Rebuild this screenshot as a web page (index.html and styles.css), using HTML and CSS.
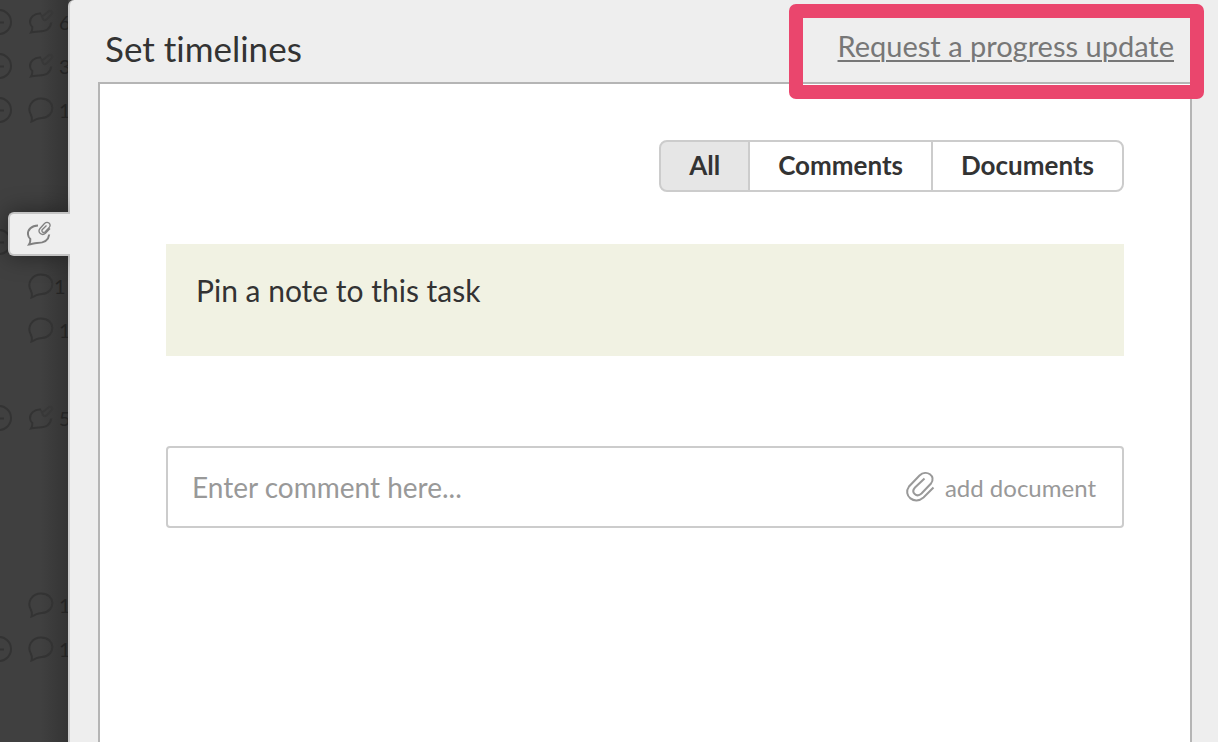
FILE: index.html
```html
<!DOCTYPE html>
<html lang="en">
<head>
<meta charset="utf-8">
<title>Set timelines</title>
<link rel="stylesheet" href="styles.css">
</head>
<body>
<svg class="symbols" aria-hidden="true">
  <symbol id="minus" viewBox="0 0 26 26"><circle cx="13" cy="13" r="12"/><path d="M9 13.500h9"/></symbol>
  <symbol id="bubble" viewBox="0 0 26 26"><path d="M3.500 24.500c.6-2 .4-4.500-.5-6.500C-1.500 10 4 1.500 13 1.500c15 0 15 18.500 1 19.500-3 .2-4 .5-5.500 1.200-1.500.8-3.500 1.800-5 2.300z"/></symbol>
  <symbol id="bubble-clip" viewBox="0 0 26 26"><path d="M13 4.500C6 4 1.500 9 2 13.500c.2 2 1 3.300 2.300 4.500.2 2-.3 4-1.300 5.500 3-.4 5-1 8-1 7 0 11.500-3 12.200-9"/><path class="faint" d="M13 5l2 5c1 2 3 1 4 0l5-5c1-2-1-4-3-3l-6 5"/></symbol>
</svg>
<main class="app">
  <aside class="rail" aria-hidden="true">
    <div class="row"><svg class="icon"><use href="#minus"/></svg><svg class="icon"><use href="#bubble-clip"/></svg><span>6</span></div>
    <div class="row"><svg class="icon"><use href="#minus"/></svg><svg class="icon"><use href="#bubble-clip"/></svg><span>3</span></div>
    <div class="row"><svg class="icon"><use href="#minus"/></svg><svg class="icon"><use href="#bubble"/></svg><span>1</span></div>
    <div class="row"></div>
    <div class="row"></div>
    <div class="row"><svg class="icon"><use href="#minus"/></svg></div>
    <div class="row"><i class="icon"></i><svg class="icon"><use href="#bubble"/></svg><span class="wide">1</span></div>
    <div class="row"><i class="icon"></i><svg class="icon"><use href="#bubble"/></svg><span>1</span></div>
    <div class="row"></div>
    <div class="row"><svg class="icon"><use href="#minus"/></svg><svg class="icon"><use href="#bubble-clip"/></svg><span>5</span></div>
    <div class="row"></div>
    <div class="row"></div>
    <div class="row"></div>
    <div class="row section"><i class="icon"></i><svg class="icon"><use href="#bubble"/></svg><span>1</span></div>
    <div class="row"><svg class="icon"><use href="#minus"/></svg><svg class="icon"><use href="#bubble"/></svg><span>1</span></div>
  </aside>
  <section class="panel">
    <button class="tab" type="button" aria-label="Comments and documents">
      <svg viewBox="0 0 26 26" class="tab-icon">
        <path class="thick" d="M12 4.500C5.500 4.500 1.500 9 2 13.500c.2 2 1 3.300 2.300 4.500.2 2-.3 4-1.300 5.500 3-.4 5-1.500 8-1.500 7 0 11.500-2.500 12.200-8.500"/>
        <path class="thin" d="M24 7.500l-4.500 4.800c-3.500 3-8.500-.8-5.500-4.800L18.500 2.500c3-2.800 7.300.3 4.700 4L19 11c-1.900 1.400-4-.6-2.600-2.500L20.500 4.500"/>
      </svg>
    </button>
    <header class="head">
      <h1 class="title">Set timelines</h1>
      <a class="request" href="#">Request a progress update</a>
      <div class="highlight"></div>
    </header>
    <div class="card">
      <div class="filters">
        <button class="filter active" type="button">All</button>
        <button class="filter" type="button">Comments</button>
        <button class="filter" type="button">Documents</button>
      </div>
      <div class="note">Pin a note to this task</div>
      <form class="comment">
        <input class="comment-input" type="text" aria-label="Comment" placeholder="Enter comment here...">
        <button class="attach" type="button">
          <svg class="clip" viewBox="0 0 30 32"><path d="M28.500 16.500 18.500 26.500C9.500 34.500-2.500 24.500 4 15.500L14.500 4.500C21.500-2 31.500 5 26 12.500L16.500 22.500C11.500 27 5.500 21.500 10 16.500L19.500 7.500"/></svg>
          add document
        </button>
      </form>
    </div>
  </section>
</main>
</body>
</html>
```
FILE: styles.css
```css
* { box-sizing: border-box; }
body {
  margin: 0;
  background: #404040;
  color: #333;
  font-family: Lato, "Open Sans", sans-serif;
  font-variant-ligatures: none;
}
button, input { font: inherit; }
.symbols { position: absolute; width: 0; height: 0; }
.app { display: flex; height: 100vh; overflow: hidden; }

.rail {
  flex: 0 0 68px;
  overflow: hidden;
  color: #242424;
  background: linear-gradient(to right, #404040 60%, #343434);
}
.row {
  display: flex;
  align-items: center;
  gap: 16px;
  height: 44px;
  margin-left: -14px;
  font-size: 20px;
}
.row.section { margin-top: 11px; }
.row span { margin-left: -11px; }
.row .wide { margin-left: -16px; }
.icon {
  flex: 0 0 26px;
  width: 26px;
  height: 26px;
  fill: none;
  stroke: #333;
  stroke-width: 2;
}
.faint { stroke: #383838; }

.panel {
  position: relative;
  flex: 1;
  display: flex;
  flex-direction: column;
  padding: 0 26px 0 28px;
  border-left: 2px solid #ccc;
  border-top-left-radius: 6px;
  background: #eee;
}
.tab {
  position: absolute;
  left: -62px;
  top: 212px;
  width: 62px;
  height: 44px;
  padding: 0 0 0 16px;
  border: 2px solid #c4c4c4;
  border-right: 0;
  border-radius: 6px 0 0 6px;
  background: #eee;
  box-shadow: 0 0 24px rgba(0, 0, 0, 0.45);
  clip-path: inset(-40px 0 -40px -40px);
}
.tab-icon { display: block; width: 26px; height: 26px; fill: none; stroke: #808080; }
.thick { stroke-width: 2; }
.thin { stroke-width: 1.3; }

.head {
  display: flex;
  align-items: center;
  justify-content: space-between;
  height: 82px;
  padding: 14px 18px 0 7px;
}
.title { margin: 0; font-size: 35px; line-height: 40px; font-weight: 400; }
.request {
  margin-bottom: 4px;
  color: #777;
  font-size: 29px;
  line-height: 36px;
  text-decoration-thickness: 2px;
  text-underline-offset: 3px;
}
.highlight {
  position: absolute;
  top: 4px;
  right: 14px;
  width: 415px;
  height: 95px;
  border: 14px solid #ea466d;
  border-radius: 7px;
  pointer-events: none;
}

.card {
  flex: 1;
  padding: 56px 66px;
  border: 2px solid #b5b5b5;
  border-bottom: 0;
  background: #fff;
}
.filters { display: flex; justify-content: flex-end; }
.filter {
  height: 52px;
  padding: 0 28px 2px;
  border: 2px solid #ccc;
  margin-left: -2px;
  background: #fff;
  color: #333;
  font-size: 26px;
  font-weight: 700;
}
.filter:first-child { border-radius: 8px 0 0 8px; }
.filter:last-child { border-radius: 0 8px 8px 0; }
.filter.active { background: #e6e6e6; }
.note {
  min-height: 112px;
  margin-top: 52px;
  padding: 28px 30px;
  background: #f1f2e3;
  font-size: 30px;
  line-height: 36px;
}
.comment {
  display: flex;
  align-items: center;
  height: 82px;
  margin-top: 90px;
  padding: 0 26px 0 24px;
  border: 2px solid #ccc;
  border-radius: 4px;
}
.comment-input {
  flex: 1;
  min-width: 0;
  padding: 0;
  border: 0;
  outline: 0;
  background: none;
  font-size: 28px;
}
.comment-input::placeholder { color: #999; opacity: 1; }
.attach {
  display: flex;
  align-items: center;
  gap: 10px;
  padding: 0;
  border: 0;
  background: none;
  color: #999;
  font-size: 24px;
}
.clip { width: 30px; height: 32px; fill: none; stroke: #999; stroke-width: 2; }
```
